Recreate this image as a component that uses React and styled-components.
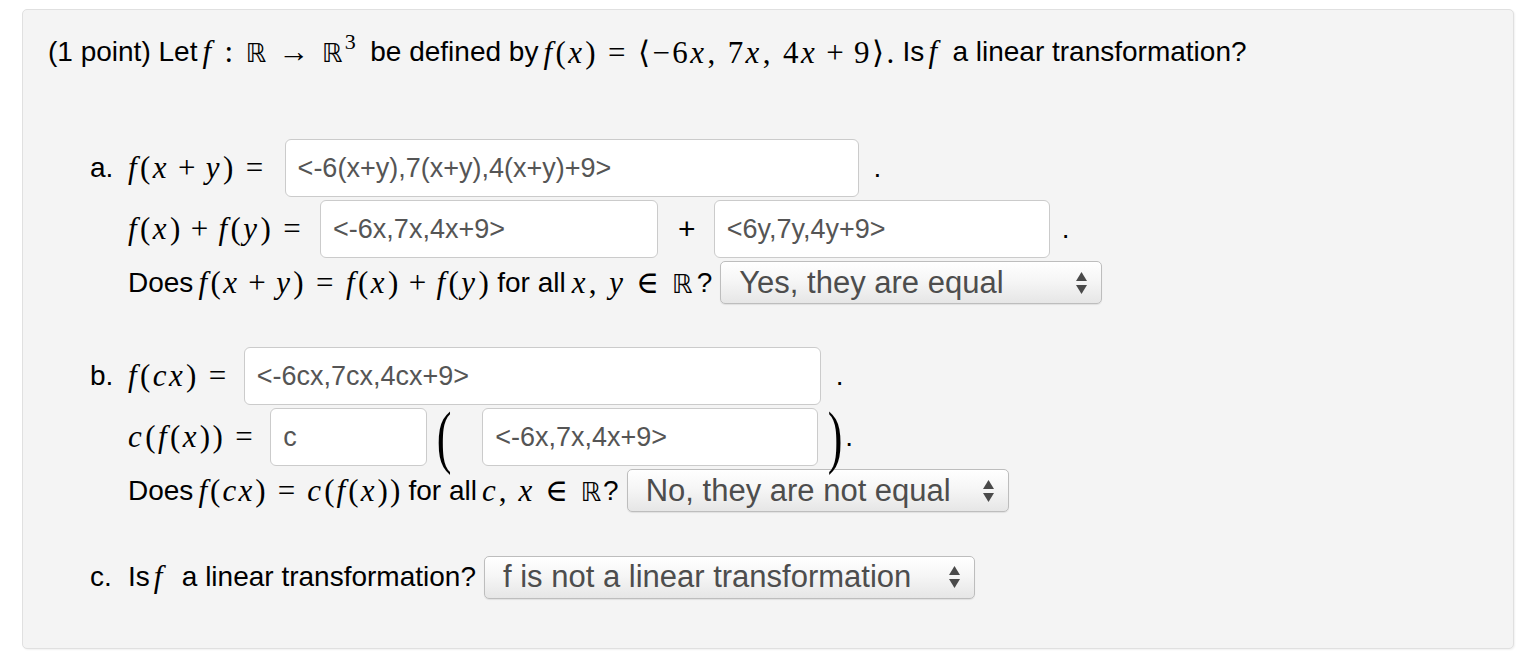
import React from 'react';
import styled, { createGlobalStyle } from 'styled-components';

const GlobalStyle = createGlobalStyle`
  body {
    margin: 0;
    background: #ffffff;
    font-family: "Liberation Sans", Arial, sans-serif;
    color: #000;
  }
`;

const Panel = styled.div`
  margin: 9px 2px 4px 22px;
  padding: 21px 25px 49px 25px;
  background: #f4f4f4;
  border: 1px solid #e0e0e0;
  border-radius: 5px;
  box-shadow: 1px 1px 2px rgba(0, 0, 0, 0.06);
  font-size: 28px;
`;

const Title = styled.div`
  height: 42px;
  display: flex;
  align-items: center;
  white-space: nowrap;
`;

const Section = styled.div`
  margin: ${({ first }) => (first ? '66px' : '43px')} 0 0 42px;
  display: grid;
  grid-template-columns: 38px auto;
  row-gap: 3px;
  align-items: center;
`;

const Label = styled.span`
  grid-column: 1;
`;

const Row = styled.div`
  grid-column: 2;
  display: flex;
  align-items: center;
  white-space: nowrap;
  height: ${({ h }) => h || 58}px;
`;

const M = styled.span`
  font-family: "Liberation Serif", "DejaVu Serif", serif;
  font-size: 31px;
  letter-spacing: ${({ ls }) => (ls === undefined ? 2.4 : ls)}px;
  margin: 0 ${({ mr }) => (mr === undefined ? 6 : mr)}px 0
    ${({ ml }) => (ml === undefined ? 6 : ml)}px;
`;

const V = styled.i`
  padding-right: 1px;
`;

const Op = styled.span`
  margin: 0 ${({ rel }) => (rel ? 10 : 8)}px;
`;

const BB = styled.span`
  font-family: "DejaVu Sans", sans-serif;
  font-style: normal;
  font-size: 26px;
`;

const Sup = styled.sup`
  font-size: 22px;
  vertical-align: 13px;
  line-height: 0;
`;

const Input = styled.div`
  box-sizing: border-box;
  width: ${({ w }) => w}px;
  height: 58px;
  padding: 0 12px;
  display: flex;
  align-items: center;
  background: #fff;
  border: 1px solid #cbcbcb;
  border-radius: 6px;
  font-size: 27px;
  color: #555;
  flex: none;
`;

const Dot = styled.span`
  margin-left: ${({ ml }) => (ml === undefined ? 15 : ml)}px;
`;

const Plus = styled.span`
  margin: 0 18px 0 20px;
  font-size: 30px;
`;

const BigParen = styled.span`
  font-family: "Liberation Serif", serif;
  font-size: 42px;
  line-height: 58px;
  height: 58px;
  display: inline-block;
  transform: scale(1.05, 1.65);
  margin: ${({ side }) => (side === 'l' ? '0 31px 0 10px' : '0 3px 0 10px')};
`;

const SelectBox = styled.div`
  box-sizing: border-box;
  width: ${({ w }) => w}px;
  height: 43px;
  margin-left: 8px;
  padding: 0 13px 0 18px;
  display: flex;
  align-items: center;
  justify-content: space-between;
  background: linear-gradient(#ffffff, #f6f6f6 45%, #e6e6e6);
  border: 1px solid #bdbdbd;
  border-radius: 5px;
  box-shadow: inset 0 1px 0 #fff, 0 1px 1px rgba(0, 0, 0, 0.08);
  font-size: 31px;
  color: #4d4d4d;
  flex: none;
`;

const Arrows = () => (
  <svg width="13" height="24" viewBox="0 0 13 24">
    <path d="M6.5 1 L12 10 H1 Z" fill="#4a4a4a" />
    <path d="M6.5 23 L12 14 H1 Z" fill="#4a4a4a" />
  </svg>
);

const Select = ({ w, children }) => (
  <SelectBox w={w}>
    <span>{children}</span>
    <Arrows />
  </SelectBox>
);

const R = () => <BB>ℝ</BB>;

export default function App() {
  return (
    <>
      <GlobalStyle />
      <Panel>
        <Title>
          (1 point) Let
          <M ml={5} mr={12}>
            <V>f</V>
            <Op rel>:</Op>
            <R />
            <Op rel>→</Op>
            <R />
            <Sup>3</Sup>
          </M>
          be defined by
          <M ml={5}>
            <V>f</V>(<V>x</V>)<Op rel>=</Op>⟨−6<V>x</V>, 7<V>x</V>, 4<V>x</V>
            <Op>+</Op>9⟩.
          </M>
          Is
          <M ml={4} mr={12}>
            <V>f</V>
          </M>
          a linear transformation?
        </Title>

        <Section first>
          <Label>a.</Label>
          <Row>
            <M ml={0} mr={9}>
              <V>f</V>(<V>x</V>
              <Op>+</Op>
              <V>y</V>)<Op rel>=</Op>
            </M>
            <Input w={574}>&lt;-6(x+y),7(x+y),4(x+y)+9&gt;</Input>
            <Dot>.</Dot>
          </Row>
          <Row>
            <M ml={0} mr={7}>
              <V>f</V>(<V>x</V>)<Op>+</Op>
              <V>f</V>(<V>y</V>)<Op rel>=</Op>
            </M>
            <Input w={338}>&lt;-6x,7x,4x+9&gt;</Input>
            <Plus>+</Plus>
            <Input w={336}>&lt;6y,7y,4y+9&gt;</Input>
            <Dot ml={12}>.</Dot>
          </Row>
          <Row h={43}>
            Does
            <M ml={5}>
              <V>f</V>(<V>x</V>
              <Op>+</Op>
              <V>y</V>)<Op rel>=</Op>
              <V>f</V>(<V>x</V>)<Op>+</Op>
              <V>f</V>(<V>y</V>)
            </M>
            for all
            <M mr={2}>
              <V>x</V>, <V>y</V>
              <Op rel>∈</Op>
              <R />
            </M>
            ?
            <Select w={382}>Yes, they are equal</Select>
          </Row>
        </Section>

        <Section>
          <Label>b.</Label>
          <Row>
            <M ml={0} mr={5}>
              <V>f</V>(<V>cx</V>)<Op rel>=</Op>
            </M>
            <Input w={577}>&lt;-6cx,7cx,4cx+9&gt;</Input>
            <Dot>.</Dot>
          </Row>
          <Row>
            <M ml={0} mr={5}>
              <V>c</V>(<V>f</V>(<V>x</V>))<Op rel>=</Op>
            </M>
            <Input w={157}>c</Input>
            <BigParen side="l">(</BigParen>
            <Input w={336}>&lt;-6x,7x,4x+9&gt;</Input>
            <BigParen side="r">)</BigParen>
            <Dot ml={0}>.</Dot>
          </Row>
          <Row h={43}>
            Does
            <M ml={5} ls={2.1}>
              <V>f</V>(<V>cx</V>)<Op rel>=</Op>
              <V>c</V>(<V>f</V>(<V>x</V>))
            </M>
            for all
            <M ml={5} mr={0} ls={2.1}>
              <V>c</V>, <V>x</V>
              <Op rel>∈</Op>
              <R />
            </M>
            ?
            <Select w={382}>No, they are not equal</Select>
          </Row>
        </Section>

        <Section>
          <Label>c.</Label>
          <Row h={44}>
            Is
            <M ml={4} mr={16}>
              <V>f</V>
            </M>
            a linear transformation?
            <Select w={491}>f is not a linear transformation</Select>
          </Row>
        </Section>
      </Panel>
    </>
  );
}
